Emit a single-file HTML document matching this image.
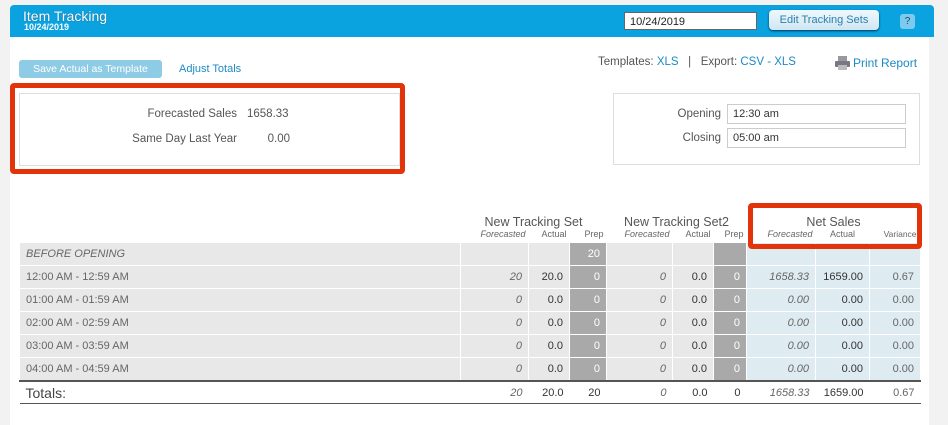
<!DOCTYPE html><html><head><style>
body{margin:0;width:948px;height:425px;background:#f2f2f2;font-family:"Liberation Sans",sans-serif;position:relative;overflow:hidden;color:#444}
.a{position:absolute}
#hdr{left:10px;top:5px;width:924px;height:32px;background:#0aa3df;border-radius:4px 4px 0 0}
#pan{left:10px;top:37px;width:919px;height:388px;background:#fff}
.lnk{color:#1c8ac4}
table{border-collapse:collapse;table-layout:fixed;font-size:11px}
td{height:22px;padding:0 6px;text-align:right;border:1px solid #fff;background:#e8e8e8;color:#333;white-space:nowrap}
td.l{text-align:left;color:#666;padding-left:6px}
td.p{background:#a9a9a9;color:#fff}
td.n{background:#deebf1}
td.i{font-style:italic;color:#666}
tr.h td{background:#fff;border:none;color:#666}
tr.t td{height:18px;vertical-align:bottom}
.sub td{font-size:9px;font-style:normal;color:#777;padding:0 3px 0;height:13px;vertical-align:top}
.tot td{background:#fff;border:none;border-top:2px solid #555;border-bottom:1px solid #555;height:21px}
</style></head><body>
<div class="a" id="hdr"></div>
<div class="a" id="pan"></div>
<div class="a" style="left:23px;top:8px;color:#fff;font-size:14px;text-shadow:0 0 1px #246">Item Tracking</div>
<div class="a" style="left:24px;top:22px;color:#fff;font-size:9px;font-weight:bold">10/24/2019</div>
<div class="a" style="left:624px;top:12px;height:18px;background:#fff;border:1px solid #666;font-size:11px;line-height:18px;box-sizing:border-box;width:133px;padding-left:5px;color:#222">10/24/2019</div>
<div class="a" style="left:769px;top:10px;width:110px;height:20px;background:linear-gradient(#f0f8fc,#cfe6f2);border-radius:4px;font-size:11px;line-height:20px;text-align:center;color:#2a7fae;box-shadow:0 1px 2px #035">Edit Tracking Sets</div>
<div class="a" style="left:900px;top:14px;width:15px;height:15px;background:#7ccbee;border-radius:3px;font-size:10px;line-height:15px;text-align:center;color:#246">?</div>
<div class="a" style="left:19px;top:60px;width:143px;height:18px;background:#8ecbe5;border-radius:3px;color:#fff;font-size:10.5px;line-height:18px;text-align:center">Save Actual as Template</div>
<div class="a lnk" style="left:179px;top:63px;font-size:11px">Adjust Totals</div>
<div class="a" style="left:598px;top:56px;font-size:11.5px;color:#555">Templates: <span class="lnk">XLS</span> &nbsp;&nbsp;| &nbsp;&nbsp;Export: <span class="lnk">CSV - XLS</span></div>
<svg class="a" style="left:835px;top:56px" width="15" height="14" viewBox="0 0 15 14"><rect x="3" y="0" width="9" height="5" fill="#999"/><rect x="0" y="5" width="15" height="6" rx="1" fill="#778"/><rect x="3" y="9" width="9" height="5" fill="#bbb"/></svg>
<div class="a lnk" style="left:853px;top:56px;font-size:12px">Print Report</div>
<div class="a" style="left:10px;top:83px;width:385px;height:81px;border:5px solid #e3330a;border-radius:4px"></div>
<div class="a" style="left:19px;top:93px;width:379px;height:71px;border:1px solid #ddd"></div>
<div class="a" style="left:60px;top:108px;width:177px;text-align:right;font-size:11.5px;color:#555">Forecasted Sales</div>
<div class="a" style="left:247px;top:108px;font-size:11.5px;color:#555">1658.33</div>
<div class="a" style="left:60px;top:133px;width:177px;text-align:right;font-size:11.5px;color:#555">Same Day Last Year</div>
<div class="a" style="left:247px;top:133px;width:43px;text-align:right;font-size:11.5px;color:#555">0.00</div>
<div class="a" style="left:613px;top:93px;width:305px;height:70px;border:1px solid #ddd"></div>
<div class="a" style="left:640px;top:108px;width:81px;text-align:right;font-size:11.5px;color:#555">Opening</div>
<div class="a" style="left:640px;top:132px;width:81px;text-align:right;font-size:11.5px;color:#555">Closing</div>
<div class="a" style="left:727px;top:104px;width:179px;height:20px;border:1px solid #ccc;box-sizing:border-box;font-size:11px;line-height:18px;padding-left:5px;color:#333">12:30 am</div>
<div class="a" style="left:727px;top:128px;width:179px;height:20px;border:1px solid #ccc;box-sizing:border-box;font-size:11px;line-height:18px;padding-left:5px;color:#333">05:00 am</div>
<table class="a" style="left:19px;top:211px;width:901px">
<colgroup><col style="width:441px"><col style="width:68px"><col style="width:41px"><col style="width:37px"><col style="width:66px"><col style="width:41px"><col style="width:33px"><col style="width:69px"><col style="width:54px"><col style="width:51px"></colgroup>
<tr class="h t"><td></td><td colspan="3" style="text-align:center;font-size:12.5px;color:#555;padding:0">New Tracking Set</td><td colspan="3" style="text-align:center;font-size:12.5px;color:#555;padding:0">New Tracking Set2</td><td colspan="3" style="text-align:center;font-size:12.5px;color:#555;padding:0">Net Sales</td></tr>
<tr class="h sub"><td></td><td><i>Forecasted</i></td><td>Actual</td><td>Prep</td><td><i>Forecasted</i></td><td>Actual</td><td>Prep</td><td><i>Forecasted</i></td><td style="text-align:center">Actual</td><td style="padding:0 4px 0 0;font-size:8.5px">Variance</td></tr>
<tr><td class="l"><i>BEFORE OPENING</i></td><td></td><td></td><td class="p">20</td><td></td><td></td><td class="p"></td><td class="n"></td><td class="n"></td><td class="n"></td></tr>
<tr><td class="l">12:00 AM - 12:59 AM</td><td class="i">20</td><td>20.0</td><td class="p">0</td><td class="i">0</td><td>0.0</td><td class="p">0</td><td class="n i">1658.33</td><td class="n">1659.00</td><td class="n" style="color:#666">0.67</td></tr>
<tr><td class="l">01:00 AM - 01:59 AM</td><td class="i">0</td><td>0.0</td><td class="p">0</td><td class="i">0</td><td>0.0</td><td class="p">0</td><td class="n i">0.00</td><td class="n">0.00</td><td class="n" style="color:#666">0.00</td></tr>
<tr><td class="l">02:00 AM - 02:59 AM</td><td class="i">0</td><td>0.0</td><td class="p">0</td><td class="i">0</td><td>0.0</td><td class="p">0</td><td class="n i">0.00</td><td class="n">0.00</td><td class="n" style="color:#666">0.00</td></tr>
<tr><td class="l">03:00 AM - 03:59 AM</td><td class="i">0</td><td>0.0</td><td class="p">0</td><td class="i">0</td><td>0.0</td><td class="p">0</td><td class="n i">0.00</td><td class="n">0.00</td><td class="n" style="color:#666">0.00</td></tr>
<tr><td class="l">04:00 AM - 04:59 AM</td><td class="i">0</td><td>0.0</td><td class="p">0</td><td class="i">0</td><td>0.0</td><td class="p">0</td><td class="n i">0.00</td><td class="n">0.00</td><td class="n" style="color:#666">0.00</td></tr>
<tr class="tot"><td class="l" style="font-size:14px;color:#444">Totals:</td><td class="i">20</td><td>20.0</td><td>20</td><td class="i">0</td><td>0.0</td><td>0</td><td class="i">1658.33</td><td>1659.00</td><td style="color:#666">0.67</td></tr>
</table>
<div class="a" style="left:748px;top:203px;width:164px;height:36px;border:5px solid #e3330a;border-radius:4px"></div>
</body></html>
